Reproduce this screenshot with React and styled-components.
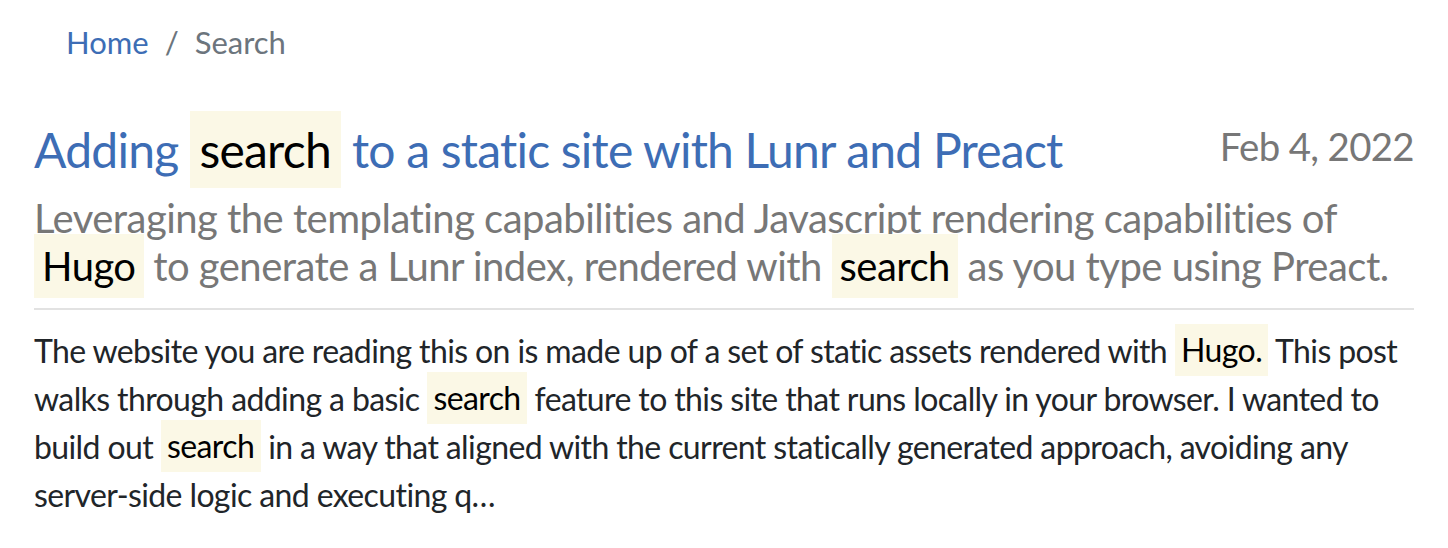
import styled, { createGlobalStyle } from "styled-components";

const GlobalStyle = createGlobalStyle`
  html, body {
    margin: 0;
    padding: 0;
    background: #ffffff;
  }
  body {
    font-family: Lato, "Noto Sans", sans-serif;
    font-weight: 400;
    font-variant-ligatures: none;
    font-feature-settings: "liga" 0;
    color: #212529;
  }
`;

const Page = styled.div`
  width: 1380px;
  padding: 0 34px;
`;

const Breadcrumb = styled.ol`
  display: flex;
  list-style: none;
  margin: 0;
  padding: 18px 32px 0;
  font-size: 31px;
  line-height: 48px;
`;

const Crumb = styled.li`
  color: ${(p) => (p.$active ? "#6c757d" : "#3d6db5")};
`;

const Separator = styled.li`
  padding: 0 16px;
  color: #6c757d;
`;

const Post = styled.article`
  margin-top: 55px;
`;

const TitleRow = styled.div`
  display: flex;
  justify-content: space-between;
  align-items: flex-start;
`;

const Title = styled.h3`
  margin: 0;
  font-size: 48px;
  font-weight: 400;
  line-height: 1.2;
  letter-spacing: -0.78px;
  color: #3d6db5;
`;

const PostDate = styled.span`
  font-size: 38.4px;
  line-height: 1.2;
  letter-spacing: -0.65px;
  color: #777777;
  margin-top: 2px;
`;

const Subtitle = styled.p`
  margin: 15px 0 0;
  padding-bottom: 18px;
  font-size: 40px;
  line-height: 48px;
  letter-spacing: -0.53px;
  color: #777777;
  border-bottom: 2px solid #e2e2e2;
`;

const Summary = styled.p`
  margin: 17px 0 0;
  font-size: 32px;
  line-height: 48px;
  letter-spacing: -0.61px;
  color: #212529;
`;

const Mark = styled.mark`
  padding: 0.2em;
  background: #fbf8e6;
  color: #000000;
`;

export default function App() {
  return (
    <>
      <GlobalStyle />
      <Page>
        <Breadcrumb>
          <Crumb>Home</Crumb>
          <Separator>/</Separator>
          <Crumb $active>Search</Crumb>
        </Breadcrumb>
        <Post>
          <TitleRow>
            <Title>
              Adding <Mark>search</Mark> to a static site with Lunr and Preact
            </Title>
            <PostDate>Feb 4, 2022</PostDate>
          </TitleRow>
          <Subtitle>
            Leveraging the templating capabilities and Javascript rendering
            capabilities of <Mark>Hugo</Mark> to generate a Lunr index, rendered
            with <Mark>search</Mark> as you type using Preact.
          </Subtitle>
          <Summary>
            The website you are reading this on is made up of a set of static
            assets rendered with <Mark>Hugo.</Mark> This post walks through
            adding a basic <Mark>search</Mark> feature to this site that runs
            locally in your browser. I wanted to build out <Mark>search</Mark> in
            a way that aligned with the current statically generated approach,
            avoiding any server-side logic and executing q…
          </Summary>
        </Post>
      </Page>
    </>
  );
}
